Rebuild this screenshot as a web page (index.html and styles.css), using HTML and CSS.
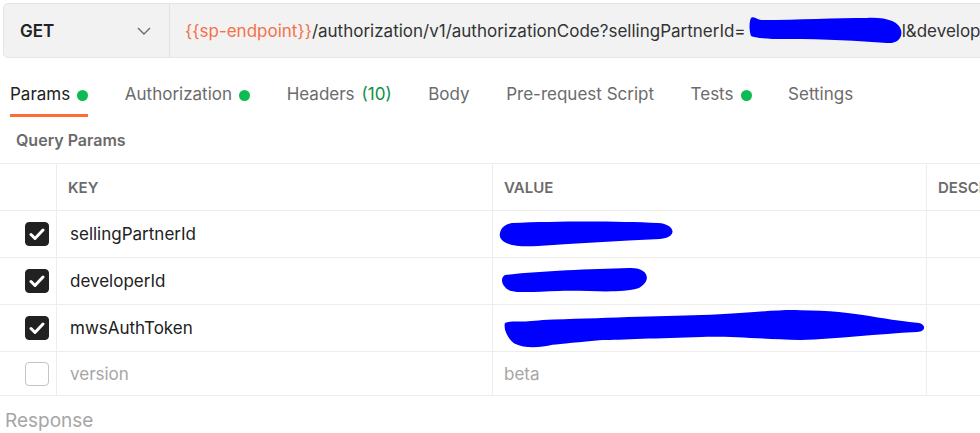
FILE: index.html
```html
<!DOCTYPE html>
<html>
<head>
<meta charset="utf-8">
<link rel="stylesheet" href="styles.css">
</head>
<body>
<div class="page">
  <div class="urlbar">
    <div class="method">
      <span class="method-name">GET</span>
      <svg class="chev" width="14" height="8" viewBox="0 0 14 8"><path d="M1 1 L7 7 L13 1" fill="none" stroke="#6b6b6b" stroke-width="1.4"/></svg>
    </div>
    <div class="url"><span class="var">{{sp-endpoint}}</span>/authorization/v1/authorizationCode?sellingPartnerId=<svg class="redact-url" width="156" height="32" viewBox="0 0 156 32"><path d="M4,4 C6,2 9,5 14,6 C50,6 90,4 120,4 C140,3 152,8 154,16 C156,24 150,30 140,29 C110,27 80,25 40,25 C20,25 8,24 4,22 C2,16 2,8 4,4 Z" fill="#0000ff"/></svg>l&amp;developerId=xxxxxxxxxxxx&amp;mwsAuthToken=xxxxxxxx&amp;version=beta</div>
  </div>

  <div class="tabs">
    <div class="tab active">Params <span class="dot"></span></div>
    <div class="tab">Authorization <span class="dot"></span></div>
    <div class="tab">Headers <span class="count">(10)</span></div>
    <div class="tab">Body</div>
    <div class="tab">Pre-request Script</div>
    <div class="tab">Tests <span class="dot"></span></div>
    <div class="tab">Settings</div>
  </div>

  <div class="section-title">Query Params</div>

  <div class="table">
    <div class="row head">
      <div class="cell check"></div>
      <div class="cell key">KEY</div>
      <div class="cell value">VALUE</div>
      <div class="cell desc">DESCRIPTION</div>
    </div>
    <div class="row">
      <div class="cell check"><span class="cb on"><svg width="16" height="13" viewBox="0 0 16 13"><path d="M2 6.5 L6 10.5 L14 2" fill="none" stroke="#fff" stroke-width="3" stroke-linecap="round" stroke-linejoin="round"/></svg></span></div>
      <div class="cell key">sellingPartnerId</div>
      <div class="cell value"><svg class="redact r1" width="180" height="28" viewBox="0 0 180 28"><path d="M14,2 C60,0 120,0 160,2 C178,3 180,17 162,18 C120,20 80,22 40,25 C10,27 0,20 2,12 C3,6 8,3 14,2 Z" fill="#0000ff"/></svg></div>
      <div class="cell desc"></div>
    </div>
    <div class="row">
      <div class="cell check"><span class="cb on"><svg width="16" height="13" viewBox="0 0 16 13"><path d="M2 6.5 L6 10.5 L14 2" fill="none" stroke="#fff" stroke-width="3" stroke-linecap="round" stroke-linejoin="round"/></svg></span></div>
      <div class="cell key">developerId</div>
      <div class="cell value"><svg class="redact r2" width="152" height="34" viewBox="0 0 152 34"><path d="M6,12 C40,8 90,6 130,5 C150,4 153,18 140,25 C120,31 90,27 60,28 C30,29 10,31 6,24 C2,20 2,14 6,12 Z" fill="#0000ff"/></svg></div>
      <div class="cell desc"></div>
    </div>
    <div class="row">
      <div class="cell check"><span class="cb on"><svg width="16" height="13" viewBox="0 0 16 13"><path d="M2 6.5 L6 10.5 L14 2" fill="none" stroke="#fff" stroke-width="3" stroke-linecap="round" stroke-linejoin="round"/></svg></span></div>
      <div class="cell key">mwsAuthToken</div>
      <div class="cell value"><svg class="redact r3" width="426" height="44" viewBox="0 0 430 44"><path d="M4,17 C10,14 20,17 42,14 C100,12 160,10 202,9 C250,7 280,3 302,4 C330,4 355,7 372,10 C395,14 410,16 422,17 C430,19 428,26 420,26 C380,28 340,33 302,34 C260,33 230,30 202,31 C160,32 120,34 102,34 C80,36 60,38 52,39 C40,42 24,43 14,38 C8,34 2,24 4,17 Z" fill="#0000ff"/></svg></div>
      <div class="cell desc"></div>
    </div>
    <div class="row last">
      <div class="cell check"><span class="cb"></span></div>
      <div class="cell key muted">version</div>
      <div class="cell value muted">beta</div>
      <div class="cell desc"></div>
    </div>
  </div>

  <div class="response">Response</div>
</div>
</body>
</html>
```

FILE: styles.css
```css
* { box-sizing: border-box; }
html, body {
  margin: 0;
  padding: 0;
  background: #ffffff;
  overflow: hidden;
}
body {
  font-family: Inter, "Open Sans", "Liberation Sans", sans-serif;
  color: #212121;
  width: 980px;
  height: 433px;
}
.page {
  width: 980px;
  overflow: hidden;
}
.urlbar {
  display: flex;
  margin: 3px 0 0 3px;
  height: 55px;
  width: 1000px;
  background: #f2f2f2;
  border: 1px solid #e6e6e6;
  border-radius: 5px;
}
.method {
  width: 166px;
  flex: none;
  display: flex;
  align-items: center;
  justify-content: space-between;
  padding: 0 18px 0 16px;
  border-right: 1px solid #e2e2e2;
}
.method-name {
  font-size: 17px;
  font-weight: 600;
  color: #212121;
}
.chev { display: block; }
.url {
  flex: 1;
  display: flex;
  align-items: center;
  padding-left: 15px;
  font-size: 17px;
  color: #333333;
  white-space: nowrap;
  overflow: hidden;
}
.var { color: #f2714a; }
.redact-url {
  flex: none;
  margin: 0 -1px 2px 1px;
}
.tabs {
  display: flex;
  gap: 36.6px;
  padding-left: 10px;
  margin-top: 26px;
  height: 33px;
}
.tab {
  font-size: 17px;
  color: #6b6b6b;
  height: 33px;
  display: flex;
  align-items: flex-start;
  gap: 7px;
  white-space: nowrap;
}
.tab.active {
  color: #212121;
  border-bottom: 3px solid #ff6c37;
}
.dot {
  width: 11px;
  height: 11px;
  border-radius: 50%;
  background: #0cbb52;
  margin-top: 6px;
}
.count { color: #0d8f45; }
.section-title {
  padding-left: 16px;
  margin-top: 12px;
  font-size: 16px;
  font-weight: 600;
  color: #6b6b6b;
  height: 25px;
  line-height: 22px;
}
.table {
  margin-top: 9px;
  border-top: 1px solid #ededed;
  width: 1000px;
}
.row {
  display: grid;
  grid-template-columns: 56px 436px 434px 1fr;
  height: 47px;
  border-bottom: 1px solid #ededed;
}
.row.last { height: 44px; }
.cell {
  display: flex;
  align-items: center;
  border-left: 1px solid #ededed;
  font-size: 17px;
  color: #212121;
  overflow: hidden;
  white-space: nowrap;
}
.cell.check {
  border-left: none;
  justify-content: flex-end;
  padding-right: 7px;
}
.cell.key { padding-left: 13px; }
.cell.value { padding-left: 11px; }
.cell.desc { padding-left: 11px; }
.head .cell {
  font-size: 15px;
  font-weight: 600;
  color: #6b6b6b;
}
.head .cell.key { padding-left: 11px; }
.muted { color: #a6a6a6; }
.cell.muted { color: #a6a6a6; }
.cb {
  width: 24px;
  height: 24px;
  border-radius: 4px;
  border: 1.5px solid #c4c4c4;
  background: #fff;
  display: flex;
  align-items: center;
  justify-content: center;
}
.cb.on {
  background: #212121;
  border-color: #212121;
}
.redact { display: block; flex: none; }
.r1 { margin-left: -6px; margin-top: 1px; }
.r2 { margin-left: -5px; margin-top: -3px; }
.r3 { margin-left: -3px; margin-top: 0; }
.response {
  margin-top: 13px;
  padding-left: 5px;
  font-size: 19px;
  color: #a6a6a6;
}
```
